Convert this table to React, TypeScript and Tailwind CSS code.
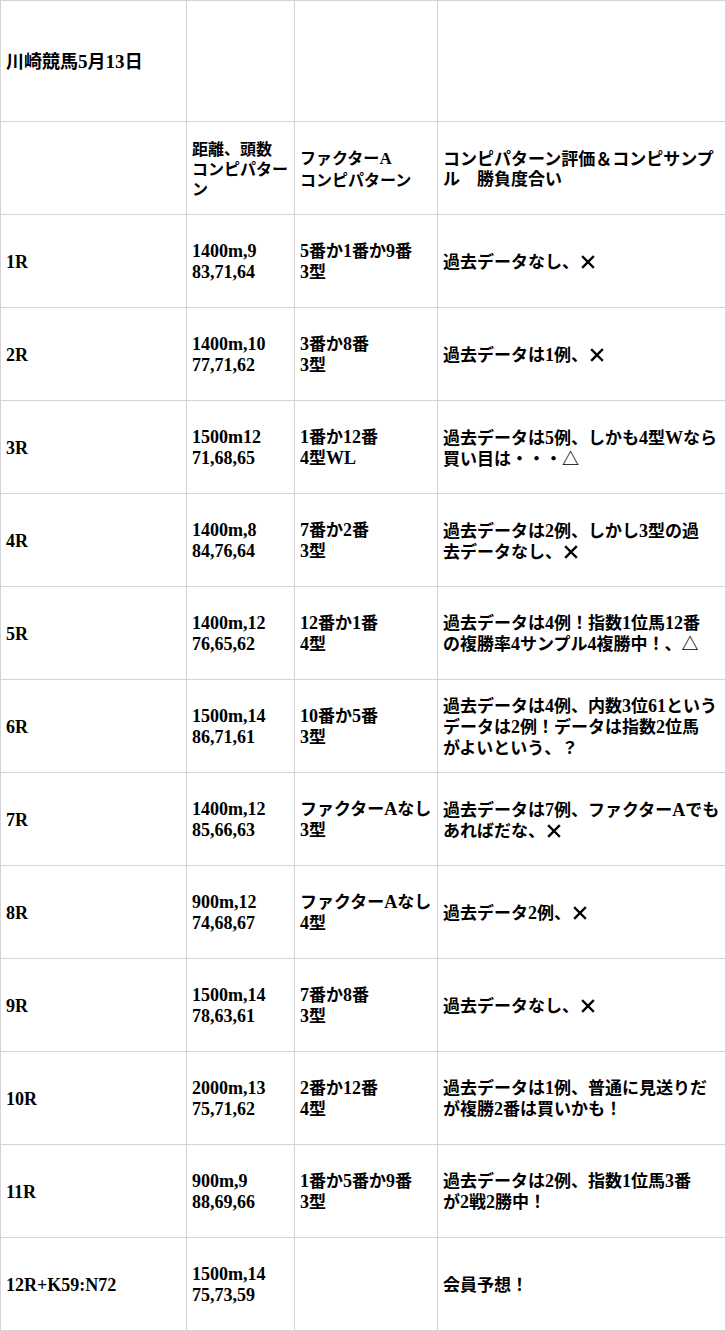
const ROWS: [string, string[], string[], string[]][] = [
  ["1R", ["1400m,9", "83,71,64"], ["5番か1番か9番", "3型"], ["過去データなし、✕"]],
  ["2R", ["1400m,10", "77,71,62"], ["3番か8番", "3型"], ["過去データは1例、✕"]],
  ["3R", ["1500m12", "71,68,65"], ["1番か12番", "4型WL"], ["過去データは5例、しかも4型Wなら", "買い目は・・・△"]],
  ["4R", ["1400m,8", "84,76,64"], ["7番か2番", "3型"], ["過去データは2例、しかし3型の過", "去データなし、✕"]],
  ["5R", ["1400m,12", "76,65,62"], ["12番か1番", "4型"], ["過去データは4例！指数1位馬12番", "の複勝率4サンプル4複勝中！、△"]],
  ["6R", ["1500m,14", "86,71,61"], ["10番か5番", "3型"], ["過去データは4例、内数3位61という", "データは2例！データは指数2位馬", "がよいという、？"]],
  ["7R", ["1400m,12", "85,66,63"], ["ファクターAなし", "3型"], ["過去データは7例、ファクターAでも", "あればだな、✕"]],
  ["8R", ["900m,12", "74,68,67"], ["ファクターAなし", "4型"], ["過去データ2例、✕"]],
  ["9R", ["1500m,14", "78,63,61"], ["7番か8番", "3型"], ["過去データなし、✕"]],
  ["10R", ["2000m,13", "75,71,62"], ["2番か12番", "4型"], ["過去データは1例、普通に見送りだ", "が複勝2番は買いかも！"]],
  ["11R", ["900m,9", "88,69,66"], ["1番か5番か9番", "3型"], ["過去データは2例、指数1位馬3番", "が2戦2勝中！"]],
  ["12R+K59:N72", ["1500m,14", "75,73,59"], [], ["会員予想！"]],
];

function Cross() {
  return (
    <svg viewBox="0 0 14 14" className="inline-block w-[14px] h-[14px] ml-[2px] align-[-1px]">
      <path d="M2 2 L12 12 M12 2 L2 12" stroke="#000" strokeWidth="2.4" strokeLinecap="square" />
    </svg>
  );
}

// Latin runs are set in a serif, like the half-width glyphs of the original
function Rich({ text }: { text: string }) {
  const parts = text.split(/([\x21-\x7E]+|✕)/).filter(Boolean);
  return (
    <>
      {parts.map((p, i) =>
        p === "✕" ? (
          <Cross key={i} />
        ) : /^[\x21-\x7E]+$/.test(p) ? (
          <span key={i} className="font-['Liberation_Serif',serif] text-[1.06em] leading-[20px]">
            {p}
          </span>
        ) : (
          <span key={i}>{p}</span>
        )
      )}
    </>
  );
}

function Lines({ lines, size }: { lines: string[]; size?: "big" | "small" }) {
  const cls =
    size === "big" ? "flex flex-col text-[18px]" : size === "small" ? "flex flex-col text-[16px]" : "flex flex-col";
  return (
    <div className={cls}>
      {lines.map((l, i) => (
        <div key={i} className="whitespace-nowrap leading-[20px]">
          <Rich text={l} />
        </div>
      ))}
    </div>
  );
}

const cell = "border border-[#d4d4d4] px-[5px] align-middle";

export default function App() {
  return (
    <div className="w-[725px] bg-white text-black font-['Noto_Sans_CJK_JP',sans-serif] font-bold text-[17px] leading-[20px]">
      <table className="w-[725px] table-fixed border-collapse">
        <colgroup>
          <col className="w-[186px]" />
          <col className="w-[108px]" />
          <col className="w-[143px]" />
          <col className="w-[288px]" />
        </colgroup>
        <tbody>
          <tr className="h-[121px]">
            <td className={cell}>
              <Lines size="big" lines={["川崎競馬5月13日"]} />
            </td>
            <td className={cell}></td>
            <td className={cell}></td>
            <td className={cell}></td>
          </tr>
          <tr className="h-[93px]">
            <td className={cell}></td>
            <td className={cell}>
              <Lines size="small" lines={["距離、頭数", "コンピパター", "ン"]} />
            </td>
            <td className={cell}>
              <Lines size="small" lines={["ファクターA", "コンピパターン"]} />
            </td>
            <td className={cell}>
              <Lines lines={["コンピパターン評価＆コンピサンプ", "ル　勝負度合い"]} />
            </td>
          </tr>
          {ROWS.map(([race, dist, factor, note]) => (
            <tr key={race} className="h-[93px]">
              <td className={cell}>
                <Lines lines={[race]} />
              </td>
              <td className={cell}>
                <Lines lines={dist} />
              </td>
              <td className={cell}>
                <Lines lines={factor} />
              </td>
              <td className={cell}>
                <Lines lines={note} />
              </td>
            </tr>
          ))}
        </tbody>
      </table>
    </div>
  );
}
